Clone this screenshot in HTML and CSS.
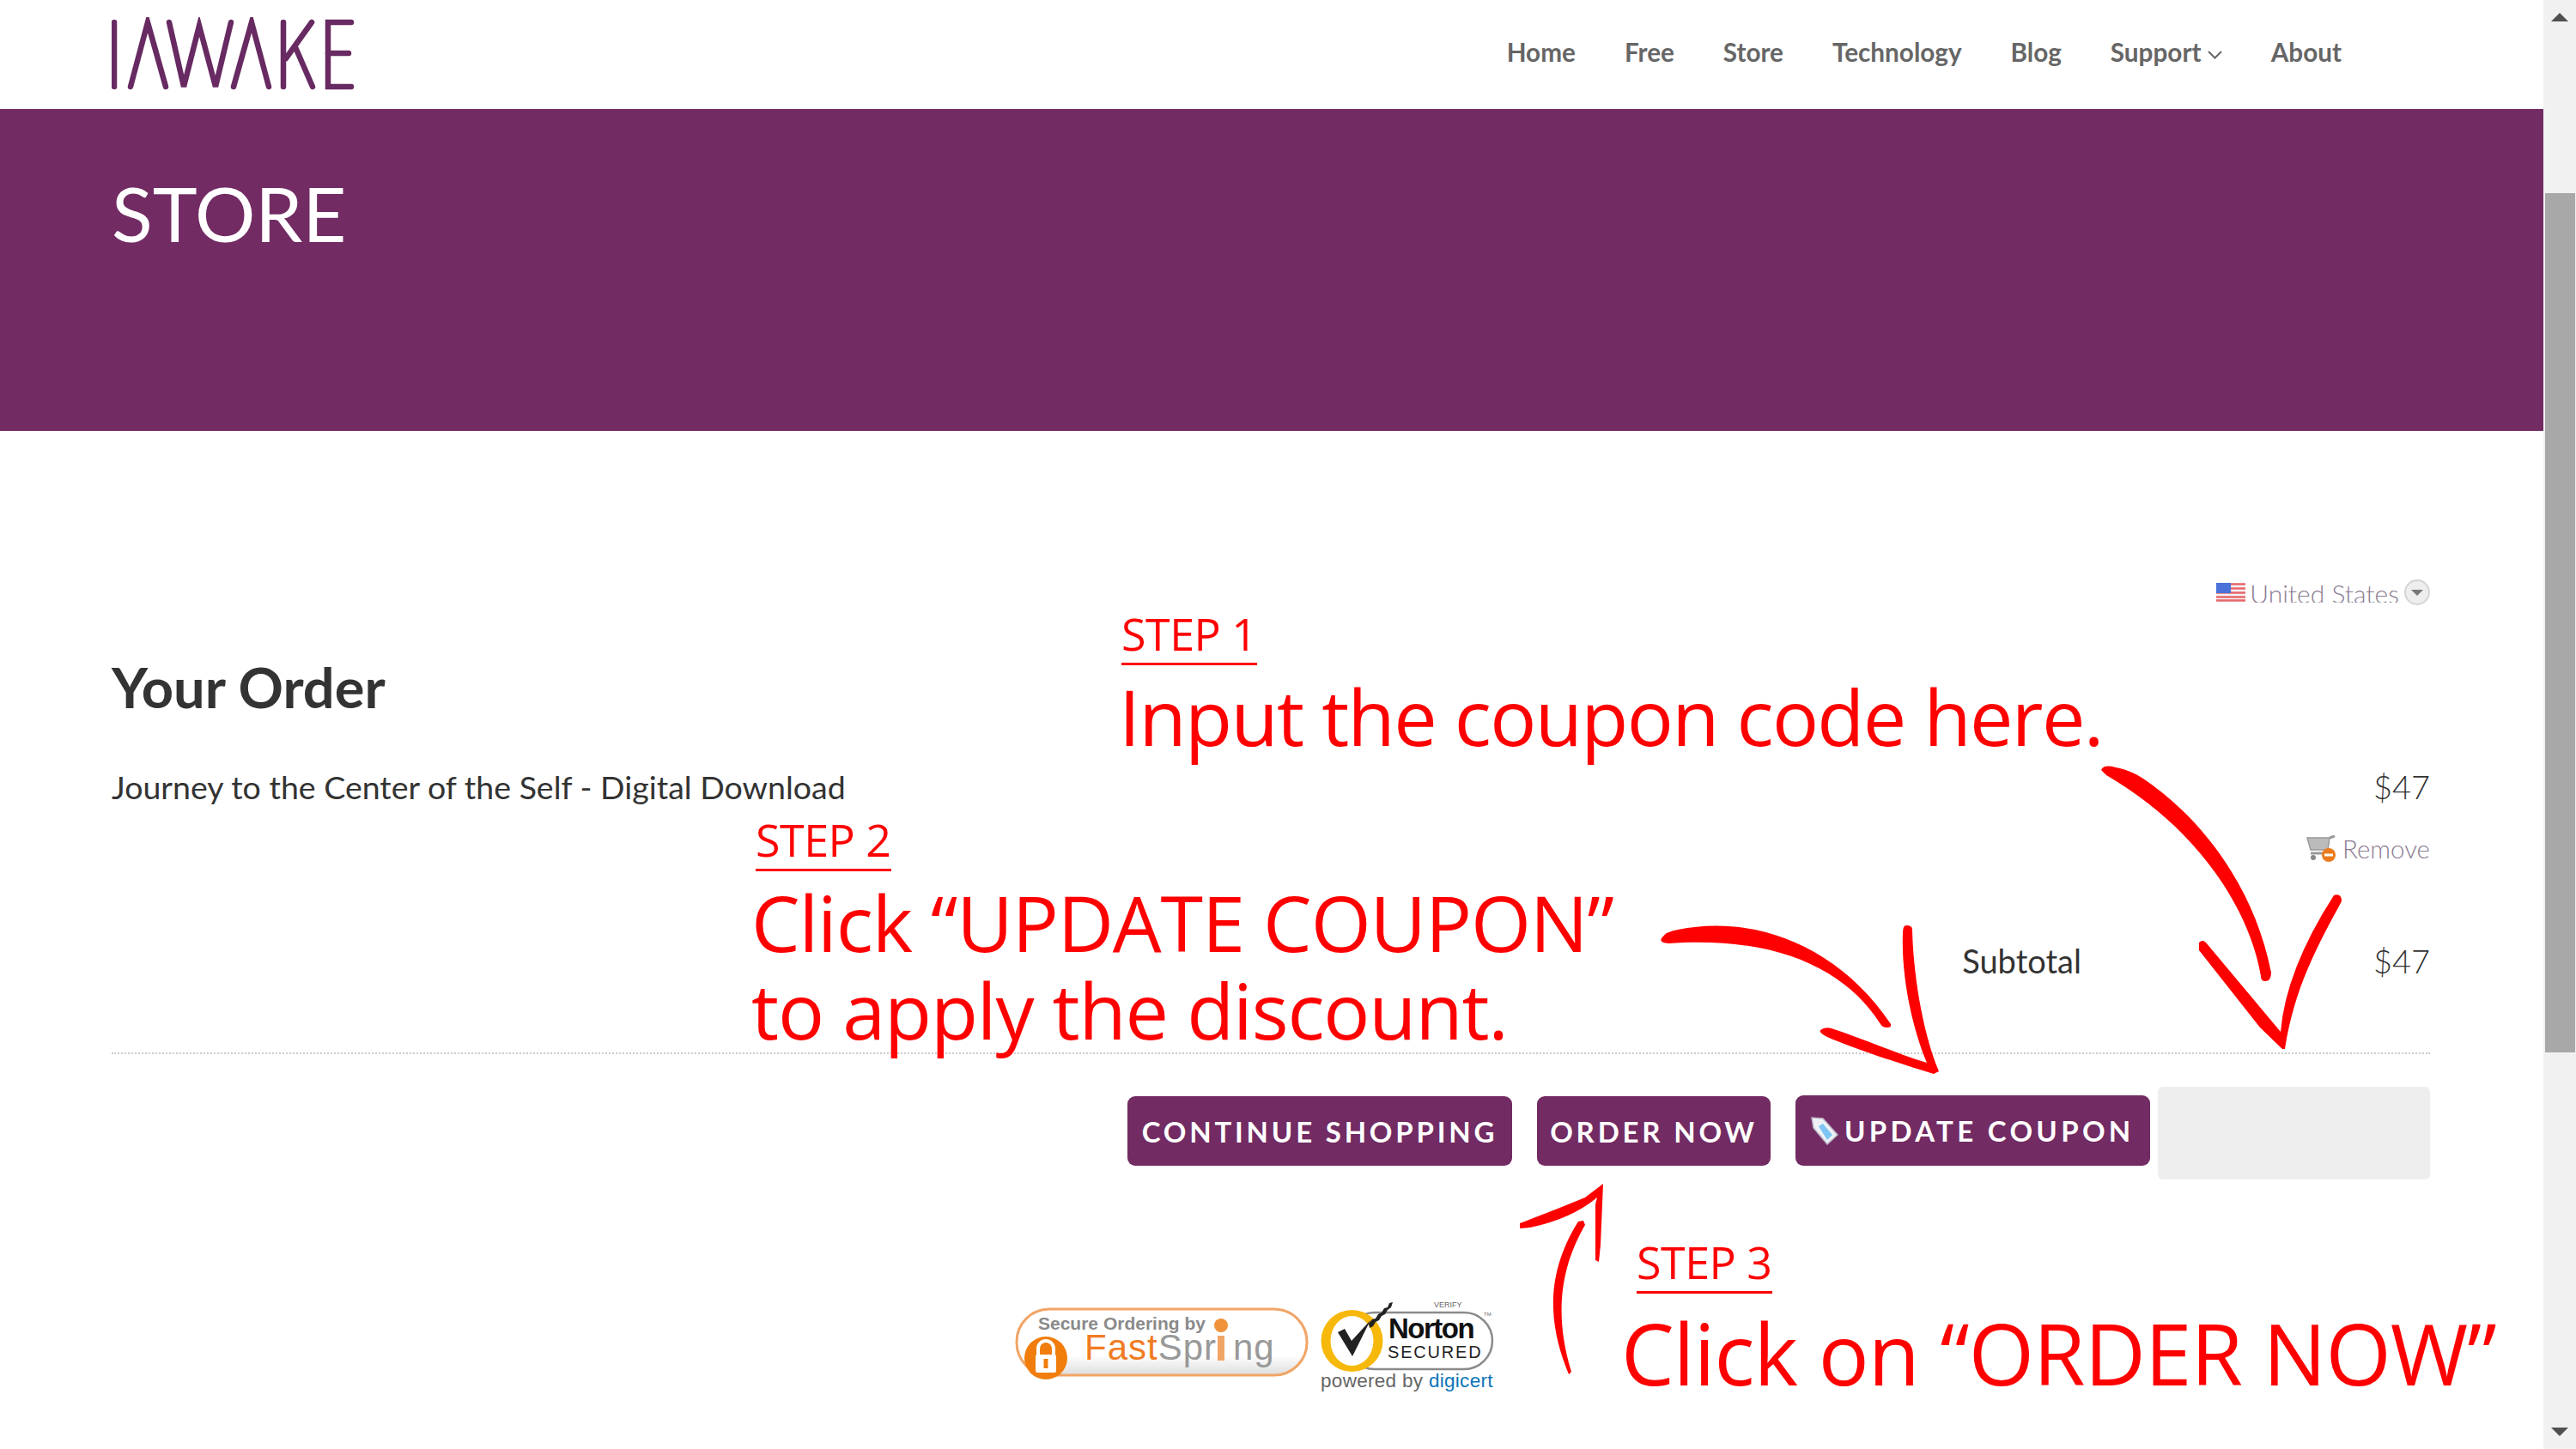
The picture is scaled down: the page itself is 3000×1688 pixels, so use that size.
FILE: index.html
```html
<!DOCTYPE html>
<html>
  <head>
    <title>Store - iAwake</title>
    <meta charset="UTF-8">
    <link rel="stylesheet" href="styles.css">
  </head>
  <body>
    <div class="page">
      <div class="navbar">
        <a class="logo" aria-label="iAwake">
          <svg width="290" height="90" viewBox="130 20 290 90">
            <g fill="none" stroke="#682a62" stroke-width="6.5" stroke-linecap="round" stroke-linejoin="miter">
              <path d="M133 26V101"/>
              <path d="M152 101L172 26L193 101"/>
              <path d="M197 26L214 101L232 30L251 101L269 26"/>
              <path d="M272 101L293 26L313 101"/>
              <path d="M330 26V101"/>
              <path d="M363 26L333 68"/>
              <path d="M344 55L364 101"/>
              <path d="M409 26H382V101H409"/>
              <path d="M382 62H406"/>
            </g>
          </svg>
        </a>
        <div class="links">
          <a>Home</a>
          <a>Free</a>
          <a>Store</a>
          <a>Technology</a>
          <a>Blog</a>
          <a>Support <svg class="chevron" width="17" height="10" viewBox="0 0 17 10"><path d="M1 1L8.500 8.500L16 1" fill="none" stroke="#666" stroke-width="2"/></svg></a>
          <a>About</a>
        </div>
      </div>

      <div class="hero">
        <h1>STORE</h1>
      </div>

      <div class="content">
        <div class="country">
          <svg class="flag" width="34" height="22" viewBox="0 0 34 22">
            <rect width="34" height="22" fill="#f4f4f6"/>
            <path d="M0 1.500H34M0 6.500H34M0 11.500H34M0 16.500H34M0 20.500H34" stroke="#e8666a" stroke-width="2.500"/>
            <rect width="17" height="12" fill="#4a72d8"/>
          </svg>
          <span class="countryName">United States</span>
          <svg width="30" height="30" viewBox="0 0 30 30">
            <circle cx="15" cy="15" r="14" fill="#eee" stroke="#d4d4d4" stroke-width="2"/>
            <path d="M8 12H22L15 19Z" fill="#777"/>
          </svg>
        </div>

        <h2>Your Order</h2>

        <div class="row item">
          <span>Journey to the Center of the Self - Digital Download</span>
          <span class="price">$47</span>
        </div>
        <div class="row remove">
          <svg width="34" height="31" viewBox="0 0 34 31">
            <path d="M1 3H27L25 17H5Z" fill="#bbb" stroke="#999" stroke-width="1.500"/>
            <path d="M27 3L33 1M5 21H26" stroke="#999" stroke-width="3" fill="none"/>
            <circle cx="8" cy="26" r="3" fill="#888"/>
            <circle cx="26" cy="23" r="8" fill="#ec7a1c"/>
            <rect x="21" y="21.500" width="10" height="3" fill="#fff"/>
          </svg>
          <span class="removeLink">Remove</span>
        </div>
        <div class="row subtotal">
          <span class="subtotalLabel">Subtotal</span>
          <span class="price">$47</span>
        </div>

        <div class="buttons">
          <a class="btn btnContinue">CONTINUE SHOPPING</a>
          <a class="btn btnOrder">ORDER NOW</a>
          <a class="btn btnCoupon">
            <svg width="32" height="33" viewBox="0 0 32 33">
              <path d="M1 1L14 2L31 21L19 32L3 13Z" fill="#eef2f6" stroke="#b9b4c4" stroke-width="1.500"/>
              <path d="M9 11L14 8L25 21L19 27Z" fill="#7cc4f2"/>
            </svg>
            UPDATE COUPON
          </a>
          <div class="couponBox"></div>
        </div>

        <div class="seals">
          <svg width="342" height="90" viewBox="0 0 342 90">
            <defs>
              <linearGradient id="pill" x1="0" y1="0" x2="0" y2="1">
                <stop offset="0" stop-color="#fff"/>
                <stop offset="0.700" stop-color="#fff"/>
                <stop offset="1" stop-color="#ddd"/>
              </linearGradient>
            </defs>
            <rect x="2" y="2" width="338" height="77" rx="38" fill="url(#pill)" stroke="#f2a566" stroke-width="3"/>
            <circle cx="36" cy="59" r="25" fill="#f07d0c"/>
            <path d="M27 56V48a9 9 0 0 1 18 0V56" fill="none" stroke="#fff" stroke-width="4"/>
            <rect x="24" y="55" width="24" height="21" rx="2" fill="#fff"/>
            <rect x="33.500" y="60" width="5" height="11" fill="#f07d0c"/>
            <text class="fsSmall" x="27" y="26">Secure Ordering by</text>
            <circle cx="240" cy="21" r="8" fill="#f0923c"/>
            <text class="fsBig" x="81" y="61"><tspan fill="#f07c24">Fast</tspan><tspan fill="#999">Spr</tspan></text>
            <rect x="236" y="33" width="8" height="29" fill="#f0a566"/>
            <text class="fsBig" x="254" y="61" fill="#999">ng</text>
          </svg>
          <svg class="norton" width="206" height="112" viewBox="0 0 206 112">
            <rect x="30" y="17" width="170" height="66" rx="33" fill="#fff" stroke="#8a8a8a" stroke-width="2.500"/>
            <circle cx="36.500" cy="50" r="36" fill="#f7b80c"/>
            <ellipse cx="36.500" cy="50" rx="25" ry="29" fill="#fff"/>
            <path d="M20 40L28 36L36 50L58 26L37 68Z" fill="#222"/>
            <path d="M56 30l4-5 4-1 3-5 4-2 3-5 4-1 2-5 4-1-2 6-4 3-3 5-4 2-3 5-4 2-3 5-4 2z" fill="#222"/>
            <text class="nortonName" x="79" y="47">Norton</text>
            <text class="nortonSecured" x="78" y="70">SECURED</text>
            <text class="verify" x="132" y="11">VERIFY</text>
            <text class="tm" x="190" y="21">TM</text>
            <text class="poweredBy" x="0" y="104">powered by <tspan fill="#0b74b8">digicert</tspan></text>
          </svg>
        </div>
      </div>

      <!-- red notes drawn on top of the page -->
      <div class="note step step1">STEP 1</div>
      <div class="note big big1">Input the coupon code here.</div>
      <div class="note step step2">STEP 2</div>
      <div class="note big big2">Click “UPDATE COUPON”<br>to apply the discount.</div>
      <div class="note step step3">STEP 3</div>
      <div class="note big big3">Click on “ORDER NOW”</div>

      <svg class="arrows" width="3000" height="1688" viewBox="0 0 3000 1688">
        <path fill="#f00" d="M2447 897Q2450 890 2464 894C2480 897 2490 903 2496 907C2560 950 2625 1030 2645 1133Q2645 1143 2638 1143Q2633 1143 2633 1137C2620 1060 2560 965 2453 903Z"/>
        <path fill="#f00" d="M2561 1098Q2565 1094 2569 1098L2656 1202Q2662 1130 2718 1043Q2727 1040 2727 1050C2700 1100 2672 1150 2661 1222L2658 1222L2632 1197L2561 1107Z"/>
        <path fill="#f00" d="M1935 1093Q1940 1085 1954 1083C2040 1065 2140 1100 2202 1193Q2203 1197 2198 1197Q2192 1197 2190 1193C2150 1130 2070 1090 1943 1099Q1932 1098 1935 1093Z"/>
        <path fill="#f00" d="M2220 1078Q2227 1078 2227 1083C2228 1130 2238 1200 2258 1248L2252 1251C2210 1238 2160 1222 2128 1208Q2118 1203 2120 1200Q2125 1196 2133 1198C2170 1210 2210 1228 2244 1238C2228 1200 2214 1140 2216 1087Q2216 1078 2220 1078Z"/>
        <path fill="#f00" d="M1867 1379L1864 1450L1862 1470L1858 1468L1858 1403L1860 1395Q1830 1420 1782 1430L1770 1431L1770 1425Q1810 1410 1846 1395Z"/>
        <path fill="#f00" d="M1844 1422L1846 1427C1824 1465 1806 1520 1830 1598L1827 1601C1806 1550 1796 1490 1838 1423Z"/>
      </svg>
    </div>

    <div class="scrollbar">
      <div class="arrowUp"></div>
      <div class="thumb"></div>
      <div class="arrowDown"></div>
    </div>
  </body>
</html>
```

FILE: styles.css
```css
* {
  box-sizing: border-box;
}
html, body {
  height: 100%;
  overflow: hidden;
}
body {
  margin: 0;
  display: flex;
  font-family: Lato, Arial, sans-serif;
  color: #333;
  background: #fff;
}
.page {
  width: 2962px;
  height: 1688px;
  flex: none;
}

/* scrollbar */
.scrollbar {
  width: 38px;
  height: 1688px;
  background: #f1f1f1;
  display: flex;
  flex-direction: column;
  align-items: center;
}
.arrowUp, .arrowDown {
  width: 0;
  height: 0;
  border-left: 10px solid transparent;
  border-right: 10px solid transparent;
}
.arrowUp {
  margin-top: 15px;
  border-bottom: 10px solid #505050;
}
.arrowDown {
  margin-top: 437px;
  border-top: 10px solid #505050;
}
.thumb {
  width: 35px;
  height: 1001px;
  margin-top: 200px;
  background: #a8a8a8;
}

/* header */
.navbar {
  height: 127px;
  display: flex;
  justify-content: space-between;
  align-items: center;
  padding: 0 235px 0 130px;
}
.logo {
  display: block;
  height: 90px;
  margin-top: 2px;
}
.links {
  display: flex;
  gap: 57px;
  margin-top: -6px;
}
.links a {
  font-size: 29.700px;
  font-weight: 700;
  color: #666;
  white-space: nowrap;
}
.chevron {
  vertical-align: 3px;
}
.hero {
  height: 375px;
  background: #722b63;
  padding: 71px 130px 0;
}
h1 {
  margin: 0;
  font-size: 88px;
  line-height: 100px;
  font-weight: 400;
  color: #fff;
}

/* order */
.content {
  padding: 0 132px 0 130px;
}
.country {
  display: flex;
  justify-content: flex-end;
  align-items: center;
  height: 30px;
  margin-top: 173px;
}
.flag {
  margin-right: 5px;
}
.countryName {
  font-size: 30px;
  font-weight: 300;
  color: #8c7c92;
  line-height: 24px;
  height: 23px;
  overflow: hidden;
  margin-right: 6px;
}
h2 {
  margin: 57px 0 0;
  font-size: 65px;
  line-height: 76px;
  font-weight: 700;
  color: #333;
}
.row {
  display: flex;
  align-items: center;
}
.item {
  justify-content: space-between;
  height: 50px;
  margin-top: 53px;
  font-size: 37.500px;
}
.price {
  font-weight: 300;
  font-size: 38px;
  color: #333;
}
.remove {
  justify-content: flex-end;
  height: 40px;
  margin-top: 27px;
  gap: 8px;
}
.removeLink {
  font-size: 29.500px;
  font-weight: 300;
  color: #8c7c92;
}
.subtotal {
  justify-content: flex-end;
  align-items: flex-start;
  height: 132px;
  margin-top: 88px;
  border-bottom: 2px dotted #ccc;
}
.subtotalLabel {
  font-size: 38px;
  margin-right: 340px;
}
.buttons {
  display: flex;
  justify-content: flex-end;
  align-items: flex-start;
  margin-top: 38px;
}
.btn {
  display: flex;
  align-items: center;
  justify-content: center;
  height: 81px;
  background: #722b63;
  border-radius: 9px;
  color: #fff;
  font-size: 33px;
  font-weight: 700;
  letter-spacing: 3.800px;
  white-space: nowrap;
  margin-top: 11px;
}
.btnContinue {
  width: 448px;
}
.btnOrder {
  width: 272px;
  margin-left: 29px;
}
.btnCoupon {
  justify-content: flex-start;
  width: 413px;
  height: 82px;
  margin: 10px 0 0 29px;
  padding-left: 18px;
  gap: 7px;
  letter-spacing: 4.300px;
}
.couponBox {
  width: 317px;
  height: 108px;
  margin-left: 9px;
  background: #eee;
  border-radius: 6px;
}
.seals {
  display: flex;
  gap: 14px;
  margin: 149px 0 0 1052px;
}
.norton {
  margin-top: -11px;
}
.fsSmall {
  font: 700 21px "Liberation Sans", Arial, sans-serif;
  fill: #8a8a8a;
}
.fsBig {
  font: 400 42px "Liberation Sans", Arial, sans-serif;
  letter-spacing: 1px;
}
.nortonName {
  font: 700 33px "Liberation Sans", Arial, sans-serif;
  letter-spacing: -1.500px;
  fill: #111;
}
.nortonSecured {
  font: 400 20px "Liberation Sans", Arial, sans-serif;
  letter-spacing: 1.800px;
  fill: #222;
}
.verify {
  font: 400 9px "Liberation Sans", Arial, sans-serif;
  fill: #666;
}
.tm {
  font: 400 6px "Liberation Sans", Arial, sans-serif;
  fill: #666;
}
.poweredBy {
  font: 400 22.500px "Liberation Sans", Arial, sans-serif;
  fill: #666;
  letter-spacing: .300px;
}

/* red notes */
.note {
  position: absolute;
  color: #f00;
  font-family: "Open Sans", "Noto Sans", sans-serif;
  white-space: nowrap;
}
.step {
  font-size: 52px;
  font-weight: 500;
  line-height: 60px;
  letter-spacing: -.500px;
  border-bottom: 3px solid #f00;
  padding-bottom: 4px;
}
.big {
  font-size: 90px;
  line-height: 102px;
}
.step1 { left: 1306px; top: 708px; }
.step2 { left: 880px; top: 948px; }
.step3 { left: 1906px; top: 1440px; }
.big1 { left: 1303px; top: 783px; letter-spacing: -1.650px; }
.big2 { left: 875px; top: 1023px; letter-spacing: -1.150px; }
.big3 { left: 1888px; top: 1521px; font-size: 98px; line-height: 110px; letter-spacing: -.900px; }
.arrows {
  position: absolute;
  left: 0;
  top: 0;
  pointer-events: none;
}
```
